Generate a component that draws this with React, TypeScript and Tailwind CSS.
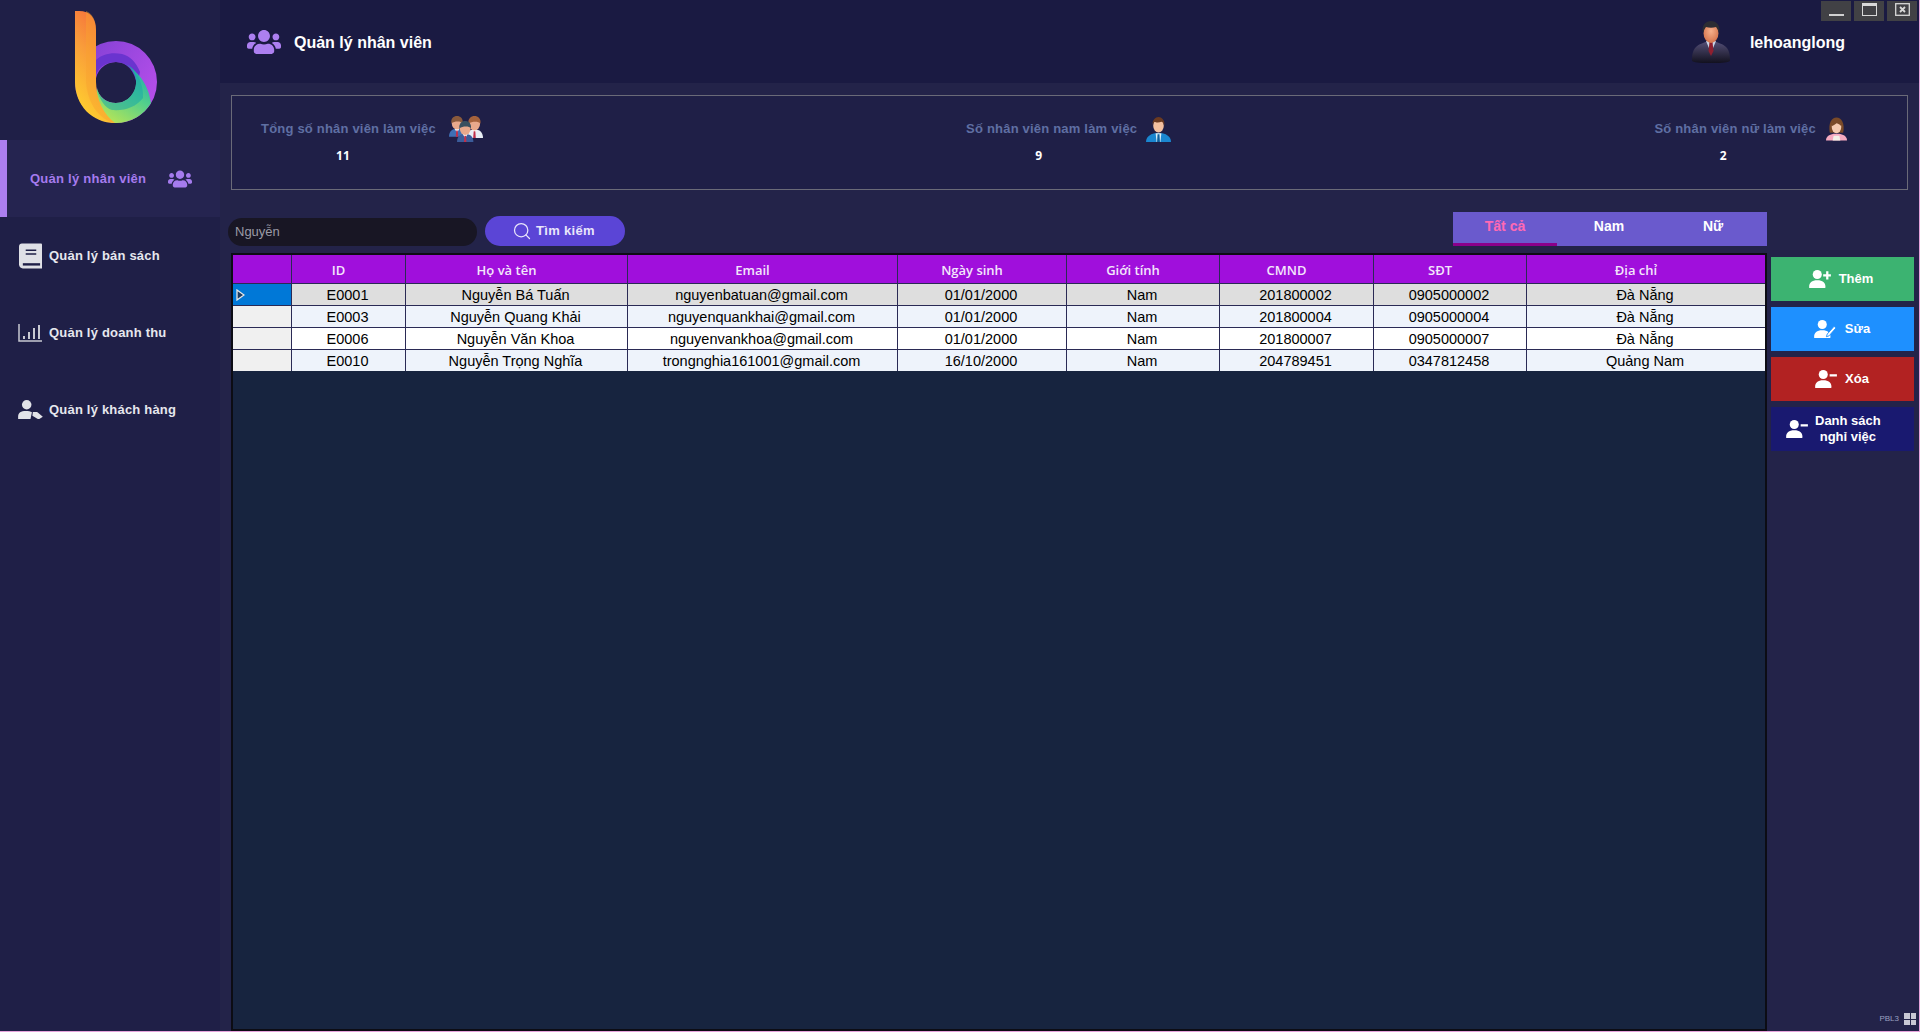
import React from "react";
import { FaUsers } from "react-icons/fa";
import { Search } from "lucide-react";

const sans = "font-['Liberation_Sans',Arial,sans-serif]";

function PersonShape({ fill = "currentColor" }: { fill?: string }) {
  return (
    <>
      <circle cx="9" cy="6" r="5" fill={fill} />
      <path d="M0 20c0-5 3-7.5 9-7.5s9 2.500 9 7.500c0 .6-.4 1-1 1H1c-.6 0-1-.4-1-1z" fill={fill} />
    </>
  );
}

function PersonIcon({ kind }: { kind: "plus" | "edit" | "minus" }) {
  return (
    <svg viewBox="0 0 24 22" className="w-[24px] h-[20px] shrink-0 text-white">
      <PersonShape />
      {kind === "plus" && <path d="M20 2.500v9M15.500 7h8.500" stroke="currentColor" strokeWidth="2.500" />}
      {kind === "minus" && <path d="M16 7h8" stroke="currentColor" strokeWidth="2.500" />}
      {kind === "edit" && <path d="M24 10l-7.500 8.500-3 1 1-3L22 8z" fill="currentColor" stroke="#1e90ff" strokeWidth="1" />}
    </svg>
  );
}

function Logo() {
  return (
    <svg viewBox="70 5 95 125" className="w-[95px] h-[125px]">
      <defs>
        <linearGradient id="lp" x1="0" y1="0" x2="1" y2="0.6">
          <stop offset="0" stopColor="#7c3fd2" />
          <stop offset="1" stopColor="#b44ee9" />
        </linearGradient>
        <linearGradient id="lg" x1="0.9" y1="0" x2="0.3" y2="1">
          <stop offset="0" stopColor="#14a5b5" />
          <stop offset="0.5" stopColor="#52cf8c" />
          <stop offset="1" stopColor="#b4e458" />
        </linearGradient>
        <linearGradient id="ls" x1="0.7" y1="0" x2="0.3" y2="1">
          <stop offset="0" stopColor="#f4663c" />
          <stop offset="0.45" stopColor="#f99c3a" />
          <stop offset="1" stopColor="#ffd22e" />
        </linearGradient>
      </defs>
      <path fillRule="evenodd" fill="url(#lp)" d="M116 41a41 41 0 1 1 0 82a41 41 0 1 1 0-82zM116 62a20.500 20.500 0 1 0 0 41a20.500 20.500 0 1 0 0-41z" />
      <path fill="#6a34cf" d="M96 60C102 54 112 52 122 54C130 56 136 62 140 72L137 86C135 70 126 62 116 62C106 62 99 67 96 75Z" />
      <path fill="url(#lg)" d="M124 63C136 70 148 82 151 103C144 115 131 123 116 123C108 123 100 118 96 100L97 88C99 97 106 103 116 103C128 103 137 92 136 80C135 72 130 66 124 63Z" />
      <path fill="#1aa8a8" opacity="0.55" d="M126 64C136 68 144 84 143 98C136 107 125 111 112 110C105 108 100 100 97 90C100 98 107 103 116 103C128 103 137 92 136 80C135 73 131 67 126 64Z" />
      <path fill="url(#ls)" d="M75 11h4C90 11 96 18 96 30V82C96 100 104 115 115 123C92 123 75 105 75 82Z" />
      <path fill="#f8a12f" opacity="0.45" d="M86 11C92 13 96 20 96 30V82C96 100 104 115 115 123C104 121 95 112 90 100C87 92 86 86 86 78Z" />
    </svg>
  );
}

function BookIcon() {
  return (
    <svg viewBox="0 0 24 26" className="w-[23px] h-[26px] shrink-0">
      <path fill="#dfe0e6" d="M3 0h20c.6 0 1 .4 1 1v25H4c-2.200 0-4-1.500-4-4V3c0-1.700 1.300-3 3-3z" />
      <path stroke="#1f1f47" strokeWidth="1.500" d="M7 7h11M7 11h11" />
      <path fill="#1f1f47" d="M4 20.500h18v2.500H4z" />
    </svg>
  );
}

function ChartIcon() {
  return (
    <svg viewBox="0 0 24 18" className="w-[24px] h-[18px] shrink-0" fill="none" stroke="#c8c9d2" strokeWidth="1.500">
      <path d="M1 0v17h23" />
      <path d="M6 12v3M11 8v7M16 4v11M21 1v14" strokeWidth="2" />
    </svg>
  );
}

function CustomerIcon() {
  return (
    <svg viewBox="0 0 26 20" className="w-[25px] h-[19px] shrink-0">
      <circle cx="9" cy="5" r="5" fill="#e2e3e8" />
      <path fill="#e2e3e8" d="M0 20v-3c0-3.500 3-5.500 8-5.500 3 0 5 .5 6.500 1.500L13 20z" />
      <path fill="#e2e3e8" d="M15.500 12.500h4.500l6 5-4.500 3-6.500-4z" />
    </svg>
  );
}

function GroupPeople() {
  const P = ({ x, y, suit, hair, s = 1 }: { x: number; y: number; suit: string; hair: string; s?: number }) => (
    <g transform={`translate(${x} ${y}) scale(${s})`}>
      <path fill={suit} d="M0 26c0-7 4-10 10-10s10 3 10 10z" />
      <path fill="#fff" d="M7 16h6l-3 5z" />
      <path fill="#c0304a" d="M9 18h2l.5 8h-3z" />
      <ellipse cx="10" cy="9.500" rx="6.500" ry="7.500" fill="#e8a98c" />
      <path fill={hair} d="M3 9c-1-6 3-9 7-9s8 3 7 9c-2-3-10-3-14 0z" />
    </g>
  );
  return (
    <svg viewBox="0 0 34 26" className="w-[34px] h-[26px] shrink-0">
      <P x={0} y={0} suit="#3f6fb5" hair="#8a5a3c" s={0.8} />
      <P x={17} y={0} suit="#e8eef5" hair="#a5623c" s={0.85} />
      <P x={8} y={5} suit="#3b5c9a" hair="#39505f" s={0.82} />
    </svg>
  );
}

function ManIcon() {
  return (
    <svg viewBox="0 0 26 26" className="w-[25px] h-[25px] shrink-0">
      <path fill="#1a86d0" d="M0 26c0-5 4-8 9-9h8c5 1 9 4 9 9z" />
      <path fill="#d8eef8" d="M10 17h6l-1 9h-4z" />
      <path fill="#0c5f9c" d="M12 18h2l.5 8h-3z" />
      <ellipse cx="13" cy="9" rx="5.500" ry="7" fill="#f4c09f" />
      <path fill="#6b3a20" d="M7 9c-1-6 3-9 6-9s7 3 6 9c-1-3-2-4-3-4-2 1-6 1-7 0-1 1-2 2-2 4z" />
    </svg>
  );
}

function WomanIcon() {
  return (
    <svg viewBox="0 0 22 24" className="w-[21px] h-[24px] shrink-0">
      <path fill="#7a4a28" d="M4 16C2 6 6 0 11 0s9 6 7 16z" />
      <path fill="#f6aac0" d="M0 24c0-4 3-6 8-7h6c5 1 8 3 8 7z" />
      <path fill="#f4f1e8" d="M8 19h6l1 5H7z" />
      <ellipse cx="11" cy="10" rx="5" ry="6.500" fill="#f6cbb0" />
      <path fill="#7a4a28" d="M6 9c0-4 2-6 5-6s5 2 5 6c-2-2-4-3-5-3-1 1-3 2-5 3z" />
    </svg>
  );
}

function ManagerAvatar() {
  return (
    <svg viewBox="0 0 38 42" className="w-[38px] h-[42px]">
      <defs>
        <radialGradient id="fc" cx="0.5" cy="0.4" r="0.7">
          <stop offset="0" stopColor="#f7b08c" />
          <stop offset="1" stopColor="#d06a42" />
        </radialGradient>
        <linearGradient id="st" x1="0" y1="0" x2="0" y2="1">
          <stop offset="0" stopColor="#524d74" />
          <stop offset="1" stopColor="#12111f" />
        </linearGradient>
      </defs>
      <path fill="url(#st)" d="M0 40c0-4 0-10 4-14 3-3 8-4 9-5h12c1 1 6 2 9 5 4 4 4 10 4 14-4 2-10 2-19 2S4 42 0 40z" />
      <path fill="#c9d4e6" d="M14 20h10l-5 12z" />
      <path fill="#8f1f2f" d="M17.500 21h3l1 9-2.500 5-2.500-5z" />
      <ellipse cx="19" cy="12" rx="7.500" ry="10" fill="url(#fc)" />
      <path fill="#2c2d33" d="M11 12C9 4 14 0 19 0s10 4 8 12c-1-3-2-5-3-6-3 1-7 1-10 0-1 1-2 3-3 6z" />
    </svg>
  );
}

const stats = [
  { label: "Tổng số nhân viên làm việc", value: "11", icon: <GroupPeople />, pad: "pr-[58px]", gap: "gap-[13px]" },
  { label: "Số nhân viên nam làm việc", value: "9", icon: <ManIcon />, pad: "pr-[60px]", gap: "gap-[9px]" },
  { label: "Số nhân viên nữ làm việc", value: "2", icon: <WomanIcon />, pad: "pr-[55px]", gap: "gap-[10px]" },
];

const cols = ["", "ID", "Họ và tên", "Email", "Ngày sinh", "Giới tính", "CMND", "SĐT", "Địa chỉ"];
const rows = [
  ["E0001", "Nguyễn Bá Tuấn", "nguyenbatuan@gmail.com", "01/01/2000", "Nam", "201800002", "0905000002", "Đà Nẵng"],
  ["E0003", "Nguyễn Quang Khải", "nguyenquankhai@gmail.com", "01/01/2000", "Nam", "201800004", "0905000004", "Đà Nẵng"],
  ["E0006", "Nguyễn Văn Khoa", "nguyenvankhoa@gmail.com", "01/01/2000", "Nam", "201800007", "0905000007", "Đà Nẵng"],
  ["E0010", "Nguyễn Trọng Nghĩa", "trongnghia161001@gmail.com", "16/10/2000", "Nam", "204789451", "0347812458", "Quảng Nam"],
];
const rowBg = ["bg-[#dedede]", "bg-[#eef3fb]", "bg-white", "bg-[#eef3fb]"];
const gridCols = "grid grid-cols-[59px_114px_222px_270px_169px_153px_154px_153px_238px]";

const nav = [
  { label: "Quản lý bán sách", icon: <BookIcon />, cls: "pl-[19px] gap-[7px]" },
  { label: "Quản lý doanh thu", icon: <ChartIcon />, cls: "pl-[18px] gap-[7px]" },
  { label: "Quản lý khách hàng", icon: <CustomerIcon />, cls: "pl-[18px] gap-[6px]" },
];

export default function App() {
  return (
    <div className={`relative w-[1920px] h-[1032px] overflow-hidden flex box-border border-r border-b border-[#e6a3dc] bg-[#232349] ${sans}`}>
      <aside className="w-[220px] shrink-0 bg-[#1f1f47] flex flex-col">
        <div className="h-[140px] pl-[70px] pt-[5px]">
          <Logo />
        </div>
        <div className="h-[77px] bg-[#252450] border-l-[7px] border-[#ac7ff0] flex items-center pl-[23px] gap-[22px] text-[#a57bee] font-bold text-[13px] tracking-[0.25px]">
          <span>Quản lý nhân viên</span>
          <FaUsers className="w-[24px] h-[24px] text-[#a57bee]" />
        </div>
        {nav.map((n) => (
          <div key={n.label} className={`h-[77px] flex items-center ${n.cls} text-[#e6e7ee] font-bold text-[13px] tracking-[0.2px]`}>
            {n.icon}
            <span>{n.label}</span>
          </div>
        ))}
      </aside>

      <main className="flex-1 flex flex-col min-w-0">
        <header className="h-[83px] shrink-0 bg-[#1a1a42] flex items-center pl-[27px] pr-[74px] text-white">
          <FaUsers className="w-[34px] h-[34px] text-[#ac7ff0]" />
          <span className="ml-[13px] text-[16px] font-bold pt-[2px]">Quản lý nhân viên</span>
          <div className="ml-auto flex items-center">
            <ManagerAvatar />
            <span className="ml-[20px] text-[16px] font-bold pt-[2px]">lehoanglong</span>
          </div>
        </header>

        <section className="ml-[11px] mt-[12px] w-[1677px] h-[95px] shrink-0 bg-[#1f1f47] border border-[#6a6a78] pl-[29px] pr-[60px] pt-[20px] flex justify-between items-start">
          {stats.map((s) => (
            <div key={s.label} className="flex flex-col">
              <div className={`flex items-center h-[26px] ${s.gap}`}>
                <span className="text-[#5f6fa3] font-bold text-[13px] tracking-[0.2px]">{s.label}</span>
                {s.icon}
              </div>
              <div className={`mt-[5px] text-center text-white font-bold text-[12px] font-['Open_Sans',sans-serif] ${s.pad}`}>{s.value}</div>
            </div>
          ))}
        </section>

        <div className="mt-[21px] h-[35px] shrink-0 w-[1547px] pl-[8px] flex items-end">
          <div className="w-[249px] h-[28px] rounded-full bg-[#181624] flex items-center pl-[7px] text-[13px] text-[#9b9ba6]">Nguyễn</div>
          <div className="ml-[8px] w-[140px] h-[30px] rounded-full bg-[#5b45d6] flex items-center justify-center gap-[4px] pr-[3px] text-[#e9e6fb] font-bold text-[13px] tracking-[0.3px]">
            <Search className="w-[20px] h-[20px]" strokeWidth={1.500} />
            <span>Tìm kiếm</span>
          </div>
          <div className="ml-auto w-[314px] h-[34px] bg-[#6a5acd] flex font-bold text-[14px] text-white">
            <div className="w-[104px] h-[34px] border-b-[3px] border-[#8b008b] flex items-center justify-center pb-[3px] text-[#ff69b4]">Tất cả</div>
            <div className="w-[104px] flex items-center justify-center pb-[6px]">Nam</div>
            <div className="w-[104px] flex items-center justify-center pb-[6px]">Nữ</div>
          </div>
        </div>

        <div className="mt-[7px] flex-1 min-h-0 flex pl-[11px]">
          <div className="w-[1536px] border-2 border-[#0c0c14] bg-[#17243f] text-[14.5px] leading-[17px] text-black">
            <div className={`${gridCols} h-[29px] bg-[#a00fdc] text-[#f3e6fb] font-semibold text-[13px] font-['Open_Sans',sans-serif]`}>
              {cols.map((c, i) => (
                <div key={i} className={`flex items-center justify-center pr-[20px] pt-[3px] border-b border-[#2a2a55] ${i < 8 ? "border-r" : ""}`}>{c}</div>
              ))}
            </div>
            {rows.map((r, ri) => {
              const edge = ri < 3 ? "border-b border-[#2a2a55]" : "border-[#2a2a55]";
              return (
                <div key={r[0]} className={`${gridCols} ${ri < 3 ? "h-[22px]" : "h-[21px]"}`}>
                  <div className={`flex items-center pl-[3px] border-r ${edge} ${ri === 0 ? "bg-[#0078d7]" : "bg-[#f0f0f0]"}`}>
                    {ri === 0 && (
                      <svg viewBox="0 0 9 12" className="w-[9px] h-[12px]">
                        <path d="M1 1l7 5-7 5z" fill="#1d3d63" stroke="#e8e8e8" strokeWidth="1.300" />
                      </svg>
                    )}
                  </div>
                  {r.map((c, ci) => (
                    <div key={ci} className={`flex items-center justify-center pr-[2px] pt-[2px] ${edge} ${ci < 7 ? "border-r" : ""} ${rowBg[ri]}`}>{c}</div>
                  ))}
                </div>
              );
            })}
          </div>

          <div className="ml-[4px] w-[143px] pt-[4px] flex flex-col gap-[6px] text-white font-bold text-[13px]">
            <div className="h-[44px] bg-[#3cb371] flex items-center justify-center gap-[7px] pr-[4px]"><PersonIcon kind="plus" /><span>Thêm</span></div>
            <div className="h-[44px] bg-[#1e90ff] flex items-center justify-center gap-[8px] pr-[2px]"><PersonIcon kind="edit" /><span>Sửa</span></div>
            <div className="h-[44px] bg-[#b22222] flex items-center justify-center gap-[7px] pr-[2px]"><PersonIcon kind="minus" /><span>Xóa</span></div>
            <div className="h-[44px] bg-[#191970] flex items-center pl-[14px] gap-[6px]">
              <PersonIcon kind="minus" />
              <span className="text-center leading-[16px]">Danh sách<br />nghỉ việc</span>
            </div>
            <div className="mt-auto pb-[6px] -mr-[2px] flex items-center justify-end gap-[5px] text-[8px] font-normal text-[#9aa0c0]">
              <span>PBL3</span>
              <div className="grid grid-cols-2 gap-[1px] w-[12px] h-[12px]">
                <div className="bg-[#c8c8d4]" /><div className="bg-[#c8c8d4]" /><div className="bg-[#c8c8d4]" /><div className="bg-[#c8c8d4]" />
              </div>
            </div>
          </div>
        </div>
      </main>

      <div className="absolute top-[1px] right-[2px] flex gap-[3px]">
        <div className="w-[30px] h-[20px] bg-[#414145] flex items-end justify-center pb-[5px]">
          <div className="w-[15px] h-[2px] bg-[#d0d0d0]" />
        </div>
        <div className="w-[30px] h-[20px] bg-[#414145] flex items-start justify-center pt-[2px]">
          <div className="w-[15px] h-[13px] border-[1.5px] border-t-[3px] border-[#d8d8d8]" />
        </div>
        <div className="w-[30px] h-[20px] bg-[#414145] flex items-start justify-center pt-[2px]">
          <svg viewBox="0 0 15 13" className="w-[15px] h-[13px]" fill="none" stroke="#d8d8d8">
            <rect x="0.700" y="0.700" width="13.600" height="11.600" strokeWidth="1.300" />
            <path d="M5 4l5 5M10 4l-5 5" strokeWidth="1.800" />
          </svg>
        </div>
      </div>
    </div>
  );
}
